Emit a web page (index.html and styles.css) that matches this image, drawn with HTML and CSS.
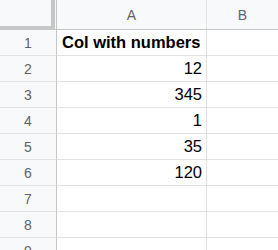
FILE: index.html
```html
<!DOCTYPE html>
<html lang="en">
<head>
    <meta charset="UTF-8">
    <title>Sheet</title>
    <link rel="stylesheet" href="styles.css">
</head>
<body>
    <div class="sheet">
        <div class="corner"><div class="freeze"></div></div>
        <div class="col-head">A</div>
        <div class="col-head last">B</div>

        <div class="row-head">1</div>
        <div class="cell bold">Col with numbers</div>
        <div class="cell empty"></div>

        <div class="row-head">2</div>
        <div class="cell num">12</div>
        <div class="cell empty"></div>

        <div class="row-head">3</div>
        <div class="cell num">345</div>
        <div class="cell empty"></div>

        <div class="row-head">4</div>
        <div class="cell num">1</div>
        <div class="cell empty"></div>

        <div class="row-head">5</div>
        <div class="cell num">35</div>
        <div class="cell empty"></div>

        <div class="row-head">6</div>
        <div class="cell num">120</div>
        <div class="cell empty"></div>

        <div class="row-head">7</div>
        <div class="cell"></div>
        <div class="cell empty"></div>

        <div class="row-head">8</div>
        <div class="cell"></div>
        <div class="cell empty"></div>

        <div class="row-head">9</div>
        <div class="cell"></div>
        <div class="cell empty"></div>
    </div>
</body>
</html>
```

FILE: styles.css
```css
body {
    margin: 0;
    background: #fff;
    font-family: "Liberation Sans", Arial, sans-serif;
    overflow: hidden;
}
.sheet {
    display: grid;
    grid-template-columns: 57px 150px 1fr;
    grid-template-rows: 30px repeat(9, 26px);
    width: 278px;
}
.corner {
    background: #f8f9fa;
    border-right: 1px solid #c4c7c5;
    border-bottom: 1px solid #c4c7c5;
}
.freeze {
    width: 51px;
    height: 26px;
    border-right: 4px solid #c4c7c5;
    border-bottom: 3px solid #c4c7c5;
}
.col-head {
    display: flex;
    align-items: center;
    justify-content: center;
    font-size: 14px;
    color: #5f6368;
    background: #f8f9fa;
    border-right: 1px solid #e1e3e1;
    border-bottom: 1px solid #c4c7c5;
}
.col-head.last {
    border-right: none;
}
.row-head {
    display: flex;
    align-items: center;
    justify-content: center;
    font-size: 14px;
    color: #5f6368;
    background: #f8f9fa;
    border-right: 1px solid #c4c7c5;
    border-bottom: 1px solid #e1e3e1;
}
.cell {
    display: flex;
    align-items: center;
    padding: 0 4px 0 5px;
    font-size: 16.5px;
    color: #000;
    border-right: 1px solid #e1e3e1;
    border-bottom: 1px solid #e1e3e1;
    white-space: nowrap;
}
.cell.empty {
    border-right: none;
}
.bold {
    font-weight: bold;
}
.num {
    justify-content: flex-end;
}
```
